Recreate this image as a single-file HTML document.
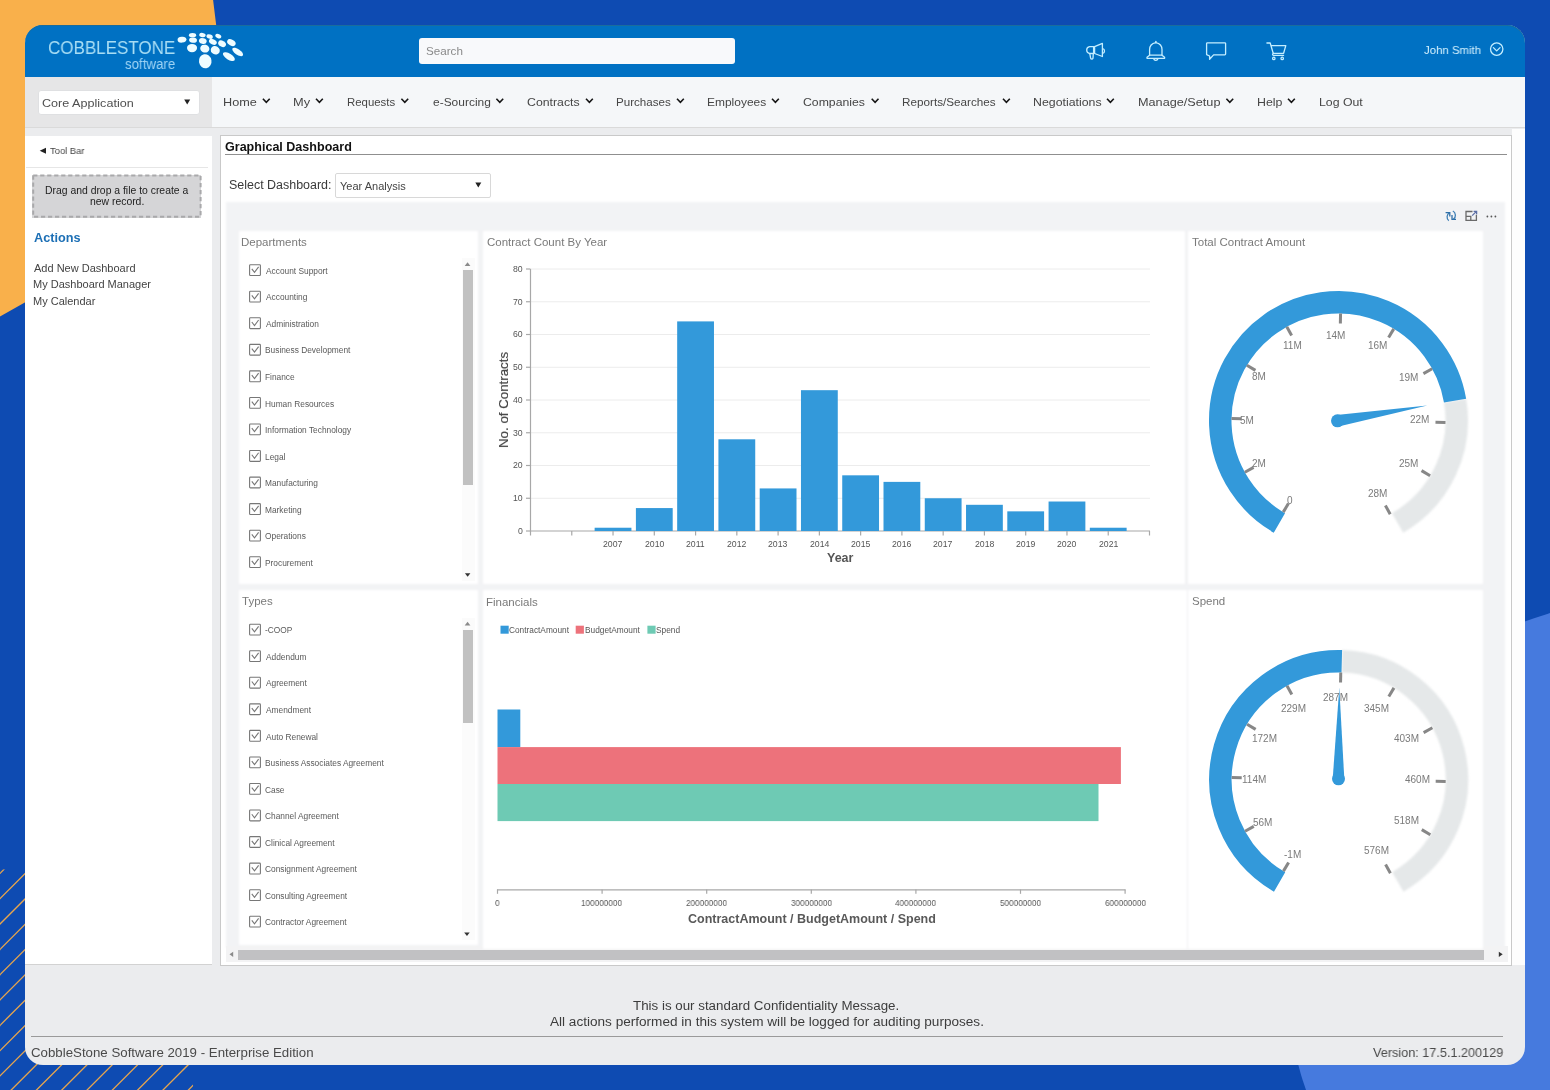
<!DOCTYPE html><html><head><meta charset="utf-8"><style>*{box-sizing:border-box;margin:0;padding:0}
html,body{width:1550px;height:1090px;overflow:hidden}
body{position:relative;background:#0e4bb2;font-family:"Liberation Sans",sans-serif;color:#333}
.t{position:absolute;white-space:nowrap;will-change:transform}
svg{position:absolute;left:0;top:0;overflow:visible}
</style></head><body>
<svg id="bg" width="1550" height="1090" viewBox="0 0 1550 1090">
  <defs><clipPath id="stripes"><polygon points="0,866 3.5,869.5 40,869.5 40,1050 189.6,1050 193.5,1090 0,1090"/></clipPath></defs>
  <path d="M0,0 L213.1,0 L216.3,26 C250,230 130,270 24.8,302.4 L0,316.6 Z" fill="#f9b04b"/>
  <circle cx="1654.5" cy="967.4" r="369.4" fill="#467ade"/>
  <g clip-path="url(#stripes)" stroke="#e9a64c" stroke-width="1.3"><line x1="-50.0" y1="872.8" x2="122.8" y2="700"/><line x1="-50.0" y1="898.1" x2="148.1" y2="700"/><line x1="-50.0" y1="923.4" x2="173.4" y2="700"/><line x1="-50.0" y1="948.7" x2="198.7" y2="700"/><line x1="-50.0" y1="974.0" x2="224.0" y2="700"/><line x1="-50.0" y1="999.3" x2="249.3" y2="700"/><line x1="-50.0" y1="1024.6" x2="274.6" y2="700"/><line x1="-50.0" y1="1049.9" x2="299.9" y2="700"/><line x1="-50.0" y1="1075.3" x2="325.3" y2="700"/><line x1="-50.0" y1="1100.6" x2="350.6" y2="700"/><line x1="-50.0" y1="1125.9" x2="375.9" y2="700"/><line x1="-50.0" y1="1151.2" x2="401.2" y2="700"/><line x1="-50.0" y1="1176.5" x2="426.5" y2="700"/><line x1="-50.0" y1="1201.8" x2="451.8" y2="700"/><line x1="-50.0" y1="1227.1" x2="477.1" y2="700"/><line x1="-50.0" y1="1252.4" x2="502.4" y2="700"/><line x1="-50.0" y1="1277.7" x2="527.7" y2="700"/><line x1="-50.0" y1="1303.0" x2="553.0" y2="700"/><line x1="-50.0" y1="1328.4" x2="578.4" y2="700"/><line x1="-50.0" y1="1353.7" x2="603.7" y2="700"/><line x1="-50.0" y1="1379.0" x2="629.0" y2="700"/><line x1="-50.0" y1="1404.3" x2="654.3" y2="700"/></g>
</svg>
<div class="t" style="left:25px;top:25px;width:1500.00px;height:1040.00px;background:#ebecee;border-radius:18px;"></div>
<div class="t" style="left:25px;top:25px;width:1500.00px;height:51.50px;background:#0071c3;border-radius:18px 18px 0 0;box-shadow:inset 0 1px 0 #1a6c9c;"></div>
<div class="t" style="left:25px;top:76.5px;width:1500.00px;height:50.50px;background:#f5f7f9;"></div>
<div class="t" style="left:25px;top:76.5px;width:187.30px;height:50.50px;background:#e6e6e7;"></div>
<svg width="1550" height="1090"><g fill="#eefcff"><ellipse cx="0" cy="0" rx="4.43" ry="2.92" transform="translate(181.96 39.68) rotate(-5)"/><ellipse cx="0" cy="0" rx="3.62" ry="2.11" transform="translate(192.53 35.15) rotate(0)"/><ellipse cx="0" cy="0" rx="3.93" ry="2.62" transform="translate(193.04 40.08) rotate(5)"/><ellipse cx="0" cy="0" rx="5.03" ry="4.13" transform="translate(192.03 48.03) rotate(0)"/><ellipse cx="0" cy="0" rx="3.27" ry="2.11" transform="translate(202.45 35.05) rotate(10)"/><ellipse cx="0" cy="0" rx="3.93" ry="2.92" transform="translate(202.80 40.98) rotate(15)"/><ellipse cx="0" cy="0" rx="4.63" ry="3.93" transform="translate(204.81 48.63) rotate(15)"/><ellipse cx="0" cy="0" rx="6.29" ry="7.05" transform="translate(205.22 61.22) rotate(-10)"/><ellipse cx="0" cy="0" rx="3.27" ry="2.11" transform="translate(209.64 36.56) rotate(20)"/><ellipse cx="0" cy="0" rx="4.13" ry="2.62" transform="translate(212.87 41.84) rotate(25)"/><ellipse cx="0" cy="0" rx="4.63" ry="4.13" transform="translate(215.28 50.24) rotate(30)"/><ellipse cx="0" cy="0" rx="3.12" ry="2.11" transform="translate(218.30 36.15) rotate(25)"/><ellipse cx="0" cy="0" rx="4.13" ry="2.92" transform="translate(222.08 43.70) rotate(30)"/><ellipse cx="0" cy="0" rx="4.53" ry="2.92" transform="translate(231.39 42.59) rotate(28)"/><ellipse cx="0" cy="0" rx="6.79" ry="3.02" transform="translate(228.87 56.59) rotate(32)"/><ellipse cx="0" cy="0" rx="6.29" ry="2.77" transform="translate(237.68 51.91) rotate(35)"/></g></svg>
<div class="t" style="left:47.55px;top:37.92px;font-size:19px;line-height:19px;color:rgba(205,245,255,0.82);transform:scaleX(0.8952);transform-origin:0 0;">COBBLESTONE</div>
<div class="t" style="left:125.20px;top:55.68px;font-size:15.5px;line-height:15.5px;color:rgba(190,232,255,0.82);transform:scaleX(0.8567);transform-origin:0 0;">software</div>
<div class="t" style="left:419px;top:37.8px;width:316.00px;height:26.20px;background:#f8f9fb;border-radius:3px;"></div>
<div class="t" style="left:426.18px;top:45.89px;font-size:11px;line-height:11px;color:#8a8a8a;transform:scaleX(1.0594);transform-origin:0 0;">Search</div>
<svg width="1550" height="1090"><g fill="none" stroke="#c4eeff" stroke-width="1.3" stroke-linejoin="round" stroke-linecap="round">
<path d="M1093.6,46.6 L1089.6,46.6 A3.5,3.5 0 0 0 1089.6,53.5 L1093.6,53.5 Z"/>
<path d="M1094.6,46.6 L1102.4,43.4 L1102.4,56.5 L1094.6,53.5 Z"/>
<path d="M1102.6,48.7 A2.4,2.4 0 0 1 1102.6,53.4"/>
<path d="M1089.8,53.6 L1090.6,58.2 A1.3,1.3 0 0 0 1093.0,58.2 L1093.3,53.6"/>
<path d="M1155.8,42.6 C1151.5,43.5 1149.6,46 1149.6,49.5 L1149.6,55.2 L1162.0,55.2 L1162.0,49.5 C1162.0,46 1160.1,43.5 1155.8,42.6 Z"/>
<path d="M1149.6,55.2 L1147,57.2 L1147,58.3 L1164.6,58.3 L1164.6,57.2 L1162,55.2"/>
<path d="M1153.8,58.6 A2,1.8 0 0 0 1157.8,58.6"/>
<path d="M1155.8,41.3 L1155.8,42.6"/>
<path d="M1207.4,42.8 L1224.8,42.8 A0.8,0.8 0 0 1 1225.6,43.6 L1225.6,54.1 A0.8,0.8 0 0 1 1224.8,54.9 L1213.6,54.9 L1209.6,59.2 L1209.6,56 L1206.6,54.6 L1206.6,43.6 A0.8,0.8 0 0 1 1207.4,42.8 Z"/>
<path d="M1266.9,43 L1270.2,43 L1273.2,53.3 L1283.6,53.3 L1285.8,45.6 L1271.3,45.6"/>
<path d="M1273.2,53.3 Q1271.8,55.2 1273.4,55.3 L1283.6,55.3"/>
<circle cx="1273.8" cy="58.4" r="1.2"/><circle cx="1282.2" cy="58.4" r="1.2"/>
<circle cx="1496.7" cy="49.1" r="6.2"/>
<path d="M1493.4,47.6 L1496.7,50.9 L1500,47.6"/>
</g></svg>
<div class="t" style="left:1423.83px;top:45.17px;font-size:11.5px;line-height:11.5px;color:#d6f3ff;transform:scaleX(0.9897);transform-origin:0 0;">John Smith</div>
<div class="t" style="left:37.5px;top:90px;width:161.50px;height:25.00px;background:#fff;border:1px solid #dfe0e2;border-radius:3px;"></div>
<div class="t" style="left:42.07px;top:97.30px;font-size:11.7px;line-height:11.7px;color:#505050;transform:scaleX(1.0772);transform-origin:0 0;">Core Application</div>
<svg width="1550" height="1090"><polygon points="184.2,99.6 190.2,99.6 187.2,104.6" fill="#222"/></svg>
<div class="t" style="left:222.79px;top:97.03px;font-size:10.6px;line-height:10.6px;color:#464646;transform:scaleX(1.1960);transform-origin:0 0;">Home</div>
<div class="t" style="left:292.87px;top:97.03px;font-size:10.6px;line-height:10.6px;color:#464646;transform:scaleX(1.2103);transform-origin:0 0;">My</div>
<div class="t" style="left:347.09px;top:97.03px;font-size:10.6px;line-height:10.6px;color:#464646;transform:scaleX(1.0765);transform-origin:0 0;">Requests</div>
<div class="t" style="left:432.52px;top:97.03px;font-size:10.6px;line-height:10.6px;color:#464646;transform:scaleX(1.1289);transform-origin:0 0;">e-Sourcing</div>
<div class="t" style="left:526.78px;top:97.03px;font-size:10.6px;line-height:10.6px;color:#464646;transform:scaleX(1.1604);transform-origin:0 0;">Contracts</div>
<div class="t" style="left:616.07px;top:97.03px;font-size:10.6px;line-height:10.6px;color:#464646;transform:scaleX(1.0948);transform-origin:0 0;">Purchases</div>
<div class="t" style="left:707.04px;top:97.03px;font-size:10.6px;line-height:10.6px;color:#464646;transform:scaleX(1.1290);transform-origin:0 0;">Employees</div>
<div class="t" style="left:803.39px;top:97.03px;font-size:10.6px;line-height:10.6px;color:#464646;transform:scaleX(1.1567);transform-origin:0 0;">Companies</div>
<div class="t" style="left:902.06px;top:97.03px;font-size:10.6px;line-height:10.6px;color:#464646;transform:scaleX(1.1048);transform-origin:0 0;">Reports/Searches</div>
<div class="t" style="left:1032.81px;top:97.03px;font-size:10.6px;line-height:10.6px;color:#464646;transform:scaleX(1.1643);transform-origin:0 0;">Negotiations</div>
<div class="t" style="left:1137.99px;top:97.03px;font-size:10.6px;line-height:10.6px;color:#464646;transform:scaleX(1.1968);transform-origin:0 0;">Manage/Setup</div>
<div class="t" style="left:1257.01px;top:97.03px;font-size:10.6px;line-height:10.6px;color:#464646;transform:scaleX(1.1701);transform-origin:0 0;">Help</div>
<div class="t" style="left:1319.02px;top:97.03px;font-size:10.6px;line-height:10.6px;color:#464646;transform:scaleX(1.1609);transform-origin:0 0;">Log Out</div>
<svg width="1550" height="1090"><g fill="none" stroke="#151515" stroke-width="1.6"><path d="M262.9,98.8 L266.3,102.3 L269.7,98.8"/><path d="M316.0,98.8 L319.4,102.3 L322.8,98.8"/><path d="M401.4,98.8 L404.8,102.3 L408.2,98.8"/><path d="M496.4,98.8 L499.8,102.3 L503.2,98.8"/><path d="M586.0,98.8 L589.4,102.3 L592.8,98.8"/><path d="M677.0,98.8 L680.4,102.3 L683.8,98.8"/><path d="M772.0,98.8 L775.4,102.3 L778.8,98.8"/><path d="M871.7,98.8 L875.1,102.3 L878.5,98.8"/><path d="M1003.0,98.8 L1006.4,102.3 L1009.8,98.8"/><path d="M1107.0,98.8 L1110.4,102.3 L1113.8,98.8"/><path d="M1226.4,98.8 L1229.8,102.3 L1233.2,98.8"/><path d="M1288.0,98.8 L1291.4,102.3 L1294.8,98.8"/></g></svg>
<div class="t" style="left:25px;top:136.4px;width:187.00px;height:828.60px;background:#fff;border-bottom:1px solid #d2d2d2;"></div>
<div class="t" style="left:25px;top:126.6px;width:1500.00px;height:1.00px;background:#dadada;"></div>
<div class="t" style="left:26px;top:167px;width:182.00px;height:1.00px;background:#e6e6e6;"></div>
<svg width="1550" height="1090"><polygon points="39.7,150.8 46,147.7 46,153.8" fill="#222"/></svg>
<div class="t" style="left:49.91px;top:145.67px;font-size:9.6px;line-height:9.6px;color:#444;transform:scaleX(0.9785);transform-origin:0 0;">Tool Bar</div>
<div class="t" style="left:32.2px;top:174.5px;width:169.40px;height:43.20px;background:#d5d5d7;"></div>
<svg width="1550" height="1090"><rect x="33.2" y="175.5" width="167.4" height="41.2" fill="none" stroke="#a9a9ab" stroke-width="2" stroke-dasharray="4.2 2.8"/></svg>
<div class="t" style="left:44.80px;top:185.70px;font-size:10.4px;line-height:10.4px;color:#222;">Drag and drop a file to create a</div>
<div class="t" style="left:89.89px;top:197.30px;font-size:10.4px;line-height:10.4px;color:#222;">new record.</div>
<div class="t" style="left:33.98px;top:232.25px;font-size:12.7px;line-height:12.7px;color:#1c6fb5;font-weight:bold;">Actions</div>
<div class="t" style="left:34.00px;top:262.89px;font-size:11px;line-height:11px;color:#444;">Add New Dashboard</div>
<div class="t" style="left:33.12px;top:279.19px;font-size:11px;line-height:11px;color:#444;">My Dashboard Manager</div>
<div class="t" style="left:33.12px;top:295.59px;font-size:11px;line-height:11px;color:#444;">My Calendar</div>
<div class="t" style="left:1512px;top:129px;width:12.50px;height:836.00px;background:#fdfdfd;"></div>
<div class="t" style="left:220px;top:135px;width:1292.00px;height:831.00px;background:#fff;border:1px solid #c9c9c9;"></div>
<div class="t" style="left:224.70px;top:140.70px;font-size:12.4px;line-height:12.4px;color:#111;font-weight:bold;transform:scaleX(1.0119);transform-origin:0 0;">Graphical Dashboard</div>
<div class="t" style="left:225px;top:153.5px;width:1282.00px;height:1.20px;background:#8f8f8f;"></div>
<div class="t" style="left:228.64px;top:178.99px;font-size:12.3px;line-height:12.3px;color:#3a3a3a;transform:scaleX(1.0130);transform-origin:0 0;">Select Dashboard:</div>
<div class="t" style="left:335.4px;top:173.3px;width:155.60px;height:24.90px;background:#fff;border:1px solid #d8d8d8;border-radius:2px;"></div>
<div class="t" style="left:340.23px;top:180.69px;font-size:11px;line-height:11px;color:#444;">Year Analysis</div>
<svg width="1550" height="1090"><polygon points="475.3,182.6 481.3,182.6 478.3,187.6" fill="#222"/></svg>
<div class="t" style="left:633.38px;top:999.54px;font-size:12px;line-height:12px;color:#3c3c3c;transform:scaleX(1.1118);transform-origin:0 0;">This is our standard Confidentiality Message.</div>
<div class="t" style="left:549.65px;top:1015.64px;font-size:12px;line-height:12px;color:#3c3c3c;transform:scaleX(1.1314);transform-origin:0 0;">All actions performed in this system will be logged for auditing purposes.</div>
<div class="t" style="left:31px;top:1035.5px;width:1472.00px;height:1.20px;background:#9a9a9a;"></div>
<div class="t" style="left:30.54px;top:1046.00px;font-size:13px;line-height:13px;color:#4a4a4a;transform:scaleX(1.0208);transform-origin:0 0;">CobbleStone Software 2019 - Enterprise Edition</div>
<div class="t" style="left:1372.94px;top:1046.40px;font-size:13px;line-height:13px;color:#4a4a4a;transform:scaleX(0.9740);transform-origin:0 0;">Version: 17.5.1.200129</div>
<div class="t" style="left:225.5px;top:202px;width:1278.50px;height:746.00px;background:#f2f3f5;filter:blur(1.2px);"></div>
<div class="t" style="left:225.5px;top:946px;width:1281.50px;height:16.00px;background:#f3f3f4;"></div>
<div class="t" style="left:238.7px;top:231px;width:239.10px;height:353.00px;background:#fff;filter:blur(1.2px);"></div>
<div class="t" style="left:482.5px;top:231px;width:702.30px;height:353.00px;background:#fff;filter:blur(1.2px);"></div>
<div class="t" style="left:1188.2px;top:231px;width:294.80px;height:353.00px;background:#fff;filter:blur(1.2px);"></div>
<div class="t" style="left:238.7px;top:589.5px;width:239.10px;height:354.50px;background:#fff;filter:blur(1.2px);"></div>
<div class="t" style="left:482.5px;top:589.5px;width:703.50px;height:358.50px;background:#fff;filter:blur(1.2px);"></div>
<div class="t" style="left:1188.2px;top:589.5px;width:294.80px;height:358.50px;background:#fff;filter:blur(1.2px);"></div>
<svg width="1550" height="1090"><g fill="none" stroke-width="1.3">
<path d="M1449.7,212.6 C1446.5,214 1446.3,219 1448.8,220.6" stroke="#3f7fb5"/>
<path d="M1445.6,212.6 L1449.8,212.6 L1449.8,216.6" stroke="#2f6fa8"/>
<path d="M1452.8,211 C1456,212.4 1456.3,217.6 1453.3,219.4" stroke="#3f7fb5"/>
<path d="M1452,215 L1452,219.4 L1456,219.4" stroke="#2f6fa8"/>
<path d="M1472.5,211.5 L1466,211.5 L1466,220.4 L1476.4,220.4 L1476.4,214.8" stroke="#6a6a6a"/>
<path d="M1466,216.4 L1470.8,216.4 L1470.8,220.4" stroke="#6a6a6a"/>
<path d="M1472.2,215.6 L1476.4,211.4 M1473.6,211.4 L1476.6,211.4 L1476.6,214.2" stroke="#5a6ea5"/>
</g><g fill="#555"><circle cx="1487.4" cy="216.5" r="0.9"/><circle cx="1491.4" cy="216.5" r="0.9"/><circle cx="1495.4" cy="216.5" r="0.9"/></g></svg>
<div class="t" style="left:241.38px;top:236.87px;font-size:11.5px;line-height:11.5px;color:#7a7a7a;">Departments</div>
<div class="t" style="left:486.62px;top:237.47px;font-size:11.5px;line-height:11.5px;color:#7a7a7a;">Contract Count By Year</div>
<div class="t" style="left:1192.17px;top:237.47px;font-size:11.5px;line-height:11.5px;color:#7a7a7a;">Total Contract Amount</div>
<div class="t" style="left:241.97px;top:596.47px;font-size:11.5px;line-height:11.5px;color:#7a7a7a;">Types</div>
<div class="t" style="left:486.38px;top:597.07px;font-size:11.5px;line-height:11.5px;color:#7a7a7a;">Financials</div>
<div class="t" style="left:1191.88px;top:596.47px;font-size:11.5px;line-height:11.5px;color:#7a7a7a;">Spend</div>
<div class="t" style="left:265.80px;top:266.83px;font-size:8.35px;line-height:8.35px;color:#5a5a5a;">Account Support</div>
<div class="t" style="left:265.80px;top:293.38px;font-size:8.35px;line-height:8.35px;color:#5a5a5a;">Accounting</div>
<div class="t" style="left:265.80px;top:319.93px;font-size:8.35px;line-height:8.35px;color:#5a5a5a;">Administration</div>
<div class="t" style="left:265.13px;top:346.48px;font-size:8.35px;line-height:8.35px;color:#5a5a5a;">Business Development</div>
<div class="t" style="left:265.13px;top:373.03px;font-size:8.35px;line-height:8.35px;color:#5a5a5a;">Finance</div>
<div class="t" style="left:265.13px;top:399.58px;font-size:8.35px;line-height:8.35px;color:#5a5a5a;">Human Resources</div>
<div class="t" style="left:265.05px;top:426.13px;font-size:8.35px;line-height:8.35px;color:#5a5a5a;">Information Technology</div>
<div class="t" style="left:265.13px;top:452.68px;font-size:8.35px;line-height:8.35px;color:#5a5a5a;">Legal</div>
<div class="t" style="left:265.13px;top:479.23px;font-size:8.35px;line-height:8.35px;color:#5a5a5a;">Manufacturing</div>
<div class="t" style="left:265.13px;top:505.78px;font-size:8.35px;line-height:8.35px;color:#5a5a5a;">Marketing</div>
<div class="t" style="left:265.42px;top:532.33px;font-size:8.35px;line-height:8.35px;color:#5a5a5a;">Operations</div>
<div class="t" style="left:265.13px;top:558.88px;font-size:8.35px;line-height:8.35px;color:#5a5a5a;">Procurement</div>
<div class="t" style="left:265.42px;top:626.33px;font-size:8.35px;line-height:8.35px;color:#5a5a5a;">-COOP</div>
<div class="t" style="left:265.80px;top:652.88px;font-size:8.35px;line-height:8.35px;color:#5a5a5a;">Addendum</div>
<div class="t" style="left:265.80px;top:679.43px;font-size:8.35px;line-height:8.35px;color:#5a5a5a;">Agreement</div>
<div class="t" style="left:265.80px;top:705.98px;font-size:8.35px;line-height:8.35px;color:#5a5a5a;">Amendment</div>
<div class="t" style="left:265.80px;top:732.53px;font-size:8.35px;line-height:8.35px;color:#5a5a5a;">Auto Renewal</div>
<div class="t" style="left:265.13px;top:759.08px;font-size:8.35px;line-height:8.35px;color:#5a5a5a;">Business Associates Agreement</div>
<div class="t" style="left:265.38px;top:785.63px;font-size:8.35px;line-height:8.35px;color:#5a5a5a;">Case</div>
<div class="t" style="left:265.38px;top:812.18px;font-size:8.35px;line-height:8.35px;color:#5a5a5a;">Channel Agreement</div>
<div class="t" style="left:265.38px;top:838.73px;font-size:8.35px;line-height:8.35px;color:#5a5a5a;">Clinical Agreement</div>
<div class="t" style="left:265.38px;top:865.28px;font-size:8.35px;line-height:8.35px;color:#5a5a5a;">Consignment Agreement</div>
<div class="t" style="left:265.38px;top:891.83px;font-size:8.35px;line-height:8.35px;color:#5a5a5a;">Consulting Agreement</div>
<div class="t" style="left:265.38px;top:918.38px;font-size:8.35px;line-height:8.35px;color:#5a5a5a;">Contractor Agreement</div>
<svg width="1550" height="1090"><g fill="none" stroke="#777" stroke-width="1.1"><rect x="249.6" y="264.70" width="10.8" height="10.8" rx="0.8"/><path d="M251.8,268.90 L254.5,272.40 L258.6,266.90"/><rect x="249.6" y="291.25" width="10.8" height="10.8" rx="0.8"/><path d="M251.8,295.45 L254.5,298.95 L258.6,293.45"/><rect x="249.6" y="317.80" width="10.8" height="10.8" rx="0.8"/><path d="M251.8,322.00 L254.5,325.50 L258.6,320.00"/><rect x="249.6" y="344.35" width="10.8" height="10.8" rx="0.8"/><path d="M251.8,348.55 L254.5,352.05 L258.6,346.55"/><rect x="249.6" y="370.90" width="10.8" height="10.8" rx="0.8"/><path d="M251.8,375.10 L254.5,378.60 L258.6,373.10"/><rect x="249.6" y="397.45" width="10.8" height="10.8" rx="0.8"/><path d="M251.8,401.65 L254.5,405.15 L258.6,399.65"/><rect x="249.6" y="424.00" width="10.8" height="10.8" rx="0.8"/><path d="M251.8,428.20 L254.5,431.70 L258.6,426.20"/><rect x="249.6" y="450.55" width="10.8" height="10.8" rx="0.8"/><path d="M251.8,454.75 L254.5,458.25 L258.6,452.75"/><rect x="249.6" y="477.10" width="10.8" height="10.8" rx="0.8"/><path d="M251.8,481.30 L254.5,484.80 L258.6,479.30"/><rect x="249.6" y="503.65" width="10.8" height="10.8" rx="0.8"/><path d="M251.8,507.85 L254.5,511.35 L258.6,505.85"/><rect x="249.6" y="530.20" width="10.8" height="10.8" rx="0.8"/><path d="M251.8,534.40 L254.5,537.90 L258.6,532.40"/><rect x="249.6" y="556.75" width="10.8" height="10.8" rx="0.8"/><path d="M251.8,560.95 L254.5,564.45 L258.6,558.95"/><rect x="249.6" y="624.20" width="10.8" height="10.8" rx="0.8"/><path d="M251.8,628.40 L254.5,631.90 L258.6,626.40"/><rect x="249.6" y="650.75" width="10.8" height="10.8" rx="0.8"/><path d="M251.8,654.95 L254.5,658.45 L258.6,652.95"/><rect x="249.6" y="677.30" width="10.8" height="10.8" rx="0.8"/><path d="M251.8,681.50 L254.5,685.00 L258.6,679.50"/><rect x="249.6" y="703.85" width="10.8" height="10.8" rx="0.8"/><path d="M251.8,708.05 L254.5,711.55 L258.6,706.05"/><rect x="249.6" y="730.40" width="10.8" height="10.8" rx="0.8"/><path d="M251.8,734.60 L254.5,738.10 L258.6,732.60"/><rect x="249.6" y="756.95" width="10.8" height="10.8" rx="0.8"/><path d="M251.8,761.15 L254.5,764.65 L258.6,759.15"/><rect x="249.6" y="783.50" width="10.8" height="10.8" rx="0.8"/><path d="M251.8,787.70 L254.5,791.20 L258.6,785.70"/><rect x="249.6" y="810.05" width="10.8" height="10.8" rx="0.8"/><path d="M251.8,814.25 L254.5,817.75 L258.6,812.25"/><rect x="249.6" y="836.60" width="10.8" height="10.8" rx="0.8"/><path d="M251.8,840.80 L254.5,844.30 L258.6,838.80"/><rect x="249.6" y="863.15" width="10.8" height="10.8" rx="0.8"/><path d="M251.8,867.35 L254.5,870.85 L258.6,865.35"/><rect x="249.6" y="889.70" width="10.8" height="10.8" rx="0.8"/><path d="M251.8,893.90 L254.5,897.40 L258.6,891.90"/><rect x="249.6" y="916.25" width="10.8" height="10.8" rx="0.8"/><path d="M251.8,920.45 L254.5,923.95 L258.6,918.45"/></g></svg>
<div class="t" style="left:461.5px;top:258px;width:12.50px;height:323.00px;background:#fbfbfb;"></div>
<div class="t" style="left:462.7px;top:270.2px;width:10.00px;height:214.70px;background:#c1c1c1;"></div>
<div class="t" style="left:461.5px;top:618px;width:12.50px;height:322.00px;background:#fbfbfb;"></div>
<div class="t" style="left:462.7px;top:630px;width:10.00px;height:93.00px;background:#c1c1c1;"></div>
<svg width="1550" height="1090">
<polygon points="464.7,266 470.4,266 467.55,262.3" fill="#8a8a8a"/>
<polygon points="464.9,573.3 470.4,573.3 467.65,576.8" fill="#333"/>
<polygon points="464.7,625.5 470.4,625.5 467.55,621.8" fill="#8a8a8a"/>
<polygon points="464.2,932.4 469.7,932.4 466.95,935.9" fill="#333"/>
</svg>
<svg width="1550" height="1090"><line x1="531" y1="498.25" x2="1150" y2="498.25" stroke="#ececec" stroke-width="1"/><line x1="531" y1="465.50" x2="1150" y2="465.50" stroke="#ececec" stroke-width="1"/><line x1="531" y1="432.75" x2="1150" y2="432.75" stroke="#ececec" stroke-width="1"/><line x1="531" y1="400.00" x2="1150" y2="400.00" stroke="#ececec" stroke-width="1"/><line x1="531" y1="367.25" x2="1150" y2="367.25" stroke="#ececec" stroke-width="1"/><line x1="531" y1="334.50" x2="1150" y2="334.50" stroke="#ececec" stroke-width="1"/><line x1="531" y1="301.75" x2="1150" y2="301.75" stroke="#ececec" stroke-width="1"/><line x1="531" y1="269.00" x2="1150" y2="269.00" stroke="#ececec" stroke-width="1"/><g stroke="#a8a8a8" stroke-width="1.2" fill="none"><line x1="530.5" y1="269" x2="530.5" y2="531.6"/><line x1="530" y1="531.0" x2="1150" y2="531.0"/><line x1="526" y1="531.00" x2="530.5" y2="531.00"/><line x1="526" y1="498.25" x2="530.5" y2="498.25"/><line x1="526" y1="465.50" x2="530.5" y2="465.50"/><line x1="526" y1="432.75" x2="530.5" y2="432.75"/><line x1="526" y1="400.00" x2="530.5" y2="400.00"/><line x1="526" y1="367.25" x2="530.5" y2="367.25"/><line x1="526" y1="334.50" x2="530.5" y2="334.50"/><line x1="526" y1="301.75" x2="530.5" y2="301.75"/><line x1="526" y1="269.00" x2="530.5" y2="269.00"/><line x1="530.50" y1="531.0" x2="530.50" y2="535.5"/><line x1="571.77" y1="531.0" x2="571.77" y2="535.5"/><line x1="613.03" y1="531.0" x2="613.03" y2="535.5"/><line x1="654.30" y1="531.0" x2="654.30" y2="535.5"/><line x1="695.57" y1="531.0" x2="695.57" y2="535.5"/><line x1="736.83" y1="531.0" x2="736.83" y2="535.5"/><line x1="778.10" y1="531.0" x2="778.10" y2="535.5"/><line x1="819.37" y1="531.0" x2="819.37" y2="535.5"/><line x1="860.63" y1="531.0" x2="860.63" y2="535.5"/><line x1="901.90" y1="531.0" x2="901.90" y2="535.5"/><line x1="943.17" y1="531.0" x2="943.17" y2="535.5"/><line x1="984.43" y1="531.0" x2="984.43" y2="535.5"/><line x1="1025.70" y1="531.0" x2="1025.70" y2="535.5"/><line x1="1066.97" y1="531.0" x2="1066.97" y2="535.5"/><line x1="1108.23" y1="531.0" x2="1108.23" y2="535.5"/><line x1="1149.50" y1="531.0" x2="1149.50" y2="535.5"/></g><rect x="594.63" y="527.73" width="36.8" height="3.27" fill="#3399da"/><rect x="635.90" y="508.07" width="36.8" height="22.93" fill="#3399da"/><rect x="677.17" y="321.40" width="36.8" height="209.60" fill="#3399da"/><rect x="718.43" y="439.30" width="36.8" height="91.70" fill="#3399da"/><rect x="759.70" y="488.43" width="36.8" height="42.57" fill="#3399da"/><rect x="800.97" y="390.18" width="36.8" height="140.82" fill="#3399da"/><rect x="842.23" y="475.32" width="36.8" height="55.67" fill="#3399da"/><rect x="883.50" y="481.88" width="36.8" height="49.12" fill="#3399da"/><rect x="924.77" y="498.25" width="36.8" height="32.75" fill="#3399da"/><rect x="966.03" y="504.80" width="36.8" height="26.20" fill="#3399da"/><rect x="1007.30" y="511.35" width="36.8" height="19.65" fill="#3399da"/><rect x="1048.57" y="501.52" width="36.8" height="29.47" fill="#3399da"/><rect x="1089.83" y="527.73" width="36.8" height="3.27" fill="#3399da"/></svg>
<div class="t" style="left:517.98px;top:526.94px;font-size:8.7px;line-height:8.7px;color:#555;">0</div>
<div class="t" style="left:513.15px;top:494.19px;font-size:8.7px;line-height:8.7px;color:#555;">10</div>
<div class="t" style="left:513.15px;top:461.44px;font-size:8.7px;line-height:8.7px;color:#555;">20</div>
<div class="t" style="left:513.15px;top:428.69px;font-size:8.7px;line-height:8.7px;color:#555;">30</div>
<div class="t" style="left:513.15px;top:395.94px;font-size:8.7px;line-height:8.7px;color:#555;">40</div>
<div class="t" style="left:513.15px;top:363.19px;font-size:8.7px;line-height:8.7px;color:#555;">50</div>
<div class="t" style="left:513.15px;top:330.44px;font-size:8.7px;line-height:8.7px;color:#555;">60</div>
<div class="t" style="left:513.15px;top:297.69px;font-size:8.7px;line-height:8.7px;color:#555;">70</div>
<div class="t" style="left:513.15px;top:264.94px;font-size:8.7px;line-height:8.7px;color:#555;">80</div>
<div class="t" style="left:603.35px;top:540.24px;font-size:8.7px;line-height:8.7px;color:#555;">2007</div>
<div class="t" style="left:644.56px;top:540.24px;font-size:8.7px;line-height:8.7px;color:#555;">2010</div>
<div class="t" style="left:686.19px;top:540.24px;font-size:8.7px;line-height:8.7px;color:#555;">2011</div>
<div class="t" style="left:727.15px;top:540.24px;font-size:8.7px;line-height:8.7px;color:#555;">2012</div>
<div class="t" style="left:768.38px;top:540.24px;font-size:8.7px;line-height:8.7px;color:#555;">2013</div>
<div class="t" style="left:809.60px;top:540.24px;font-size:8.7px;line-height:8.7px;color:#555;">2014</div>
<div class="t" style="left:850.91px;top:540.24px;font-size:8.7px;line-height:8.7px;color:#555;">2015</div>
<div class="t" style="left:892.18px;top:540.24px;font-size:8.7px;line-height:8.7px;color:#555;">2016</div>
<div class="t" style="left:933.49px;top:540.24px;font-size:8.7px;line-height:8.7px;color:#555;">2017</div>
<div class="t" style="left:974.71px;top:540.24px;font-size:8.7px;line-height:8.7px;color:#555;">2018</div>
<div class="t" style="left:1016.00px;top:540.24px;font-size:8.7px;line-height:8.7px;color:#555;">2019</div>
<div class="t" style="left:1057.22px;top:540.24px;font-size:8.7px;line-height:8.7px;color:#555;">2020</div>
<div class="t" style="left:1098.53px;top:540.24px;font-size:8.7px;line-height:8.7px;color:#555;">2021</div>
<div class="t" style="left:826.55px;top:552.22px;font-size:12.5px;line-height:12.5px;color:#555;font-weight:bold;">Year</div>
<div class="t" style="left:504px;top:400px;width:0;height:0;"><div style="position:absolute;left:0;top:0;transform:translate(-50%,-50%) rotate(-90deg);font-size:13.3px;line-height:14px;color:#454545;-webkit-text-stroke:0.2px #454545;white-space:nowrap">No. of Contracts</div></div>
<svg width="1550" height="1090" style="filter:blur(0.8px)"><path d="M1455.06,400.58 A118.25,118.25 0 0 1 1397.62,522.91" stroke="#e5e8e9" stroke-width="22.5" fill="none"/></svg>
<svg width="1550" height="1090"><path d="M1279.38,522.91 A118.25,118.25 0 1 1 1455.06,400.58" stroke="#3399da" stroke-width="22.5" fill="none"/><line x1="1283.23" y1="512.12" x2="1288.40" y2="503.56" stroke="#878787" stroke-width="3"/><line x1="1244.83" y1="472.21" x2="1253.58" y2="467.38" stroke="#878787" stroke-width="3"/><line x1="1231.52" y1="418.45" x2="1241.52" y2="418.64" stroke="#878787" stroke-width="3"/><line x1="1246.88" y1="365.23" x2="1255.44" y2="370.40" stroke="#878787" stroke-width="3"/><line x1="1286.79" y1="326.83" x2="1291.62" y2="335.58" stroke="#878787" stroke-width="3"/><line x1="1340.55" y1="313.52" x2="1340.36" y2="323.52" stroke="#878787" stroke-width="3"/><line x1="1393.77" y1="328.88" x2="1388.60" y2="337.44" stroke="#878787" stroke-width="3"/><line x1="1432.17" y1="368.79" x2="1423.42" y2="373.62" stroke="#878787" stroke-width="3"/><line x1="1445.48" y1="422.55" x2="1435.48" y2="422.36" stroke="#878787" stroke-width="3"/><line x1="1430.12" y1="475.77" x2="1421.56" y2="470.60" stroke="#878787" stroke-width="3"/><line x1="1390.21" y1="514.17" x2="1385.38" y2="505.42" stroke="#878787" stroke-width="3"/><path d="M1336.52,415.08 L1427.20,405.47 L1338.48,426.52 Z" fill="#3399da"/><circle cx="1337.5" cy="420.8" r="6.5" fill="#3399da"/></svg>
<div class="t" style="left:1287.00px;top:496.04px;font-size:10px;line-height:10px;color:#7b7b7b;">0</div>
<div class="t" style="left:1251.82px;top:459.24px;font-size:10px;line-height:10px;color:#7b7b7b;">2M</div>
<div class="t" style="left:1240.17px;top:416.44px;font-size:10px;line-height:10px;color:#7b7b7b;">5M</div>
<div class="t" style="left:1251.85px;top:372.24px;font-size:10px;line-height:10px;color:#7b7b7b;">8M</div>
<div class="t" style="left:1283.47px;top:341.44px;font-size:10px;line-height:10px;color:#7b7b7b;">11M</div>
<div class="t" style="left:1325.92px;top:330.74px;font-size:10px;line-height:10px;color:#7b7b7b;">14M</div>
<div class="t" style="left:1367.73px;top:341.44px;font-size:10px;line-height:10px;color:#7b7b7b;">16M</div>
<div class="t" style="left:1398.92px;top:373.24px;font-size:10px;line-height:10px;color:#7b7b7b;">19M</div>
<div class="t" style="left:1409.75px;top:415.04px;font-size:10px;line-height:10px;color:#7b7b7b;">22M</div>
<div class="t" style="left:1399.05px;top:458.54px;font-size:10px;line-height:10px;color:#7b7b7b;">25M</div>
<div class="t" style="left:1367.85px;top:488.63px;font-size:10px;line-height:10px;color:#7b7b7b;">28M</div>
<svg width="1550" height="1090" style="filter:blur(0.8px)"><path d="M1341.80,661.29 A118.25,118.25 0 0 1 1397.83,881.91" stroke="#e5e8e9" stroke-width="22.5" fill="none"/></svg>
<svg width="1550" height="1090"><path d="M1279.58,881.91 A118.25,118.25 0 0 1 1341.80,661.29" stroke="#3399da" stroke-width="22.5" fill="none"/><line x1="1283.43" y1="871.12" x2="1288.60" y2="862.56" stroke="#878787" stroke-width="3"/><line x1="1245.03" y1="831.21" x2="1253.78" y2="826.38" stroke="#878787" stroke-width="3"/><line x1="1231.72" y1="777.45" x2="1241.72" y2="777.64" stroke="#878787" stroke-width="3"/><line x1="1247.08" y1="724.23" x2="1255.64" y2="729.40" stroke="#878787" stroke-width="3"/><line x1="1286.99" y1="685.83" x2="1291.82" y2="694.58" stroke="#878787" stroke-width="3"/><line x1="1340.75" y1="672.52" x2="1340.56" y2="682.52" stroke="#878787" stroke-width="3"/><line x1="1393.97" y1="687.88" x2="1388.80" y2="696.44" stroke="#878787" stroke-width="3"/><line x1="1432.37" y1="727.79" x2="1423.62" y2="732.62" stroke="#878787" stroke-width="3"/><line x1="1445.68" y1="781.55" x2="1435.68" y2="781.36" stroke="#878787" stroke-width="3"/><line x1="1430.32" y1="834.77" x2="1421.76" y2="829.60" stroke="#878787" stroke-width="3"/><line x1="1390.41" y1="873.17" x2="1385.58" y2="864.42" stroke="#878787" stroke-width="3"/><path d="M1332.70,778.75 L1339.29,687.80 L1344.30,778.85 Z" fill="#3399da"/><circle cx="1338.5" cy="778.8" r="6.5" fill="#3399da"/></svg>
<div class="t" style="left:1284.38px;top:850.33px;font-size:10px;line-height:10px;color:#7b7b7b;">-1M</div>
<div class="t" style="left:1252.50px;top:817.93px;font-size:10px;line-height:10px;color:#7b7b7b;">56M</div>
<div class="t" style="left:1241.50px;top:774.93px;font-size:10px;line-height:10px;color:#7b7b7b;">114M</div>
<div class="t" style="left:1251.83px;top:734.23px;font-size:10px;line-height:10px;color:#7b7b7b;">172M</div>
<div class="t" style="left:1281.45px;top:703.93px;font-size:10px;line-height:10px;color:#7b7b7b;">229M</div>
<div class="t" style="left:1322.65px;top:692.93px;font-size:10px;line-height:10px;color:#7b7b7b;">287M</div>
<div class="t" style="left:1363.50px;top:703.93px;font-size:10px;line-height:10px;color:#7b7b7b;">345M</div>
<div class="t" style="left:1393.70px;top:734.23px;font-size:10px;line-height:10px;color:#7b7b7b;">403M</div>
<div class="t" style="left:1404.70px;top:774.93px;font-size:10px;line-height:10px;color:#7b7b7b;">460M</div>
<div class="t" style="left:1393.60px;top:816.23px;font-size:10px;line-height:10px;color:#7b7b7b;">518M</div>
<div class="t" style="left:1363.50px;top:846.33px;font-size:10px;line-height:10px;color:#7b7b7b;">576M</div>
<svg width="1550" height="1090"><rect x="500.5" y="625.7" width="8.2" height="8" fill="#3399da"/><rect x="575.7" y="625.7" width="8.2" height="8" fill="#ed727b"/><rect x="647.4" y="625.7" width="8.2" height="8" fill="#6ecab4"/><rect x="497.5" y="709.5" width="22.8" height="37.6" fill="#3399da"/><rect x="497.5" y="747.1" width="623.4" height="36.9" fill="#ed727b"/><rect x="497.5" y="784" width="601" height="37.1" fill="#6ecab4"/><g stroke="#a8a8a8" stroke-width="1.2"><line x1="497" y1="889.8" x2="1125.5" y2="889.8"/><line x1="497.50" y1="889.5" x2="497.50" y2="893.8"/><line x1="602.10" y1="889.5" x2="602.10" y2="893.8"/><line x1="706.70" y1="889.5" x2="706.70" y2="893.8"/><line x1="811.30" y1="889.5" x2="811.30" y2="893.8"/><line x1="915.90" y1="889.5" x2="915.90" y2="893.8"/><line x1="1020.50" y1="889.5" x2="1020.50" y2="893.8"/><line x1="1125.10" y1="889.5" x2="1125.10" y2="893.8"/></g></svg>
<div class="t" style="left:509.28px;top:625.97px;font-size:8.3px;line-height:8.3px;color:#555;">ContractAmount</div>
<div class="t" style="left:584.94px;top:625.97px;font-size:8.3px;line-height:8.3px;color:#555;">BudgetAmount</div>
<div class="t" style="left:655.63px;top:625.97px;font-size:8.3px;line-height:8.3px;color:#555;">Spend</div>
<div class="t" style="left:495.21px;top:898.50px;font-size:9.1px;line-height:9.1px;color:#585858;transform:scaleX(0.9000);transform-origin:0 0;">0</div>
<div class="t" style="left:581.44px;top:898.50px;font-size:9.1px;line-height:9.1px;color:#585858;transform:scaleX(0.9000);transform-origin:0 0;">100000000</div>
<div class="t" style="left:686.14px;top:898.50px;font-size:9.1px;line-height:9.1px;color:#585858;transform:scaleX(0.9000);transform-origin:0 0;">200000000</div>
<div class="t" style="left:790.78px;top:898.50px;font-size:9.1px;line-height:9.1px;color:#585858;transform:scaleX(0.9000);transform-origin:0 0;">300000000</div>
<div class="t" style="left:895.47px;top:898.50px;font-size:9.1px;line-height:9.1px;color:#585858;transform:scaleX(0.9000);transform-origin:0 0;">400000000</div>
<div class="t" style="left:999.98px;top:898.50px;font-size:9.1px;line-height:9.1px;color:#585858;transform:scaleX(0.9000);transform-origin:0 0;">500000000</div>
<div class="t" style="left:1104.54px;top:898.50px;font-size:9.1px;line-height:9.1px;color:#585858;transform:scaleX(0.9000);transform-origin:0 0;">600000000</div>
<div class="t" style="left:687.52px;top:912.82px;font-size:12.5px;line-height:12.5px;color:#595959;font-weight:bold;">ContractAmount / BudgetAmount / Spend</div>
<div class="t" style="left:238.3px;top:949.7px;width:1245.80px;height:9.50px;background:#c1c1c3;"></div>
<svg width="1550" height="1090">
<polygon points="229.5,954.3 233.2,951.7 233.2,956.9" fill="#8a8a8a"/>
<polygon points="1502.7,954.3 1498.8,951.7 1498.8,956.9" fill="#333"/>
</svg>
</body></html>
